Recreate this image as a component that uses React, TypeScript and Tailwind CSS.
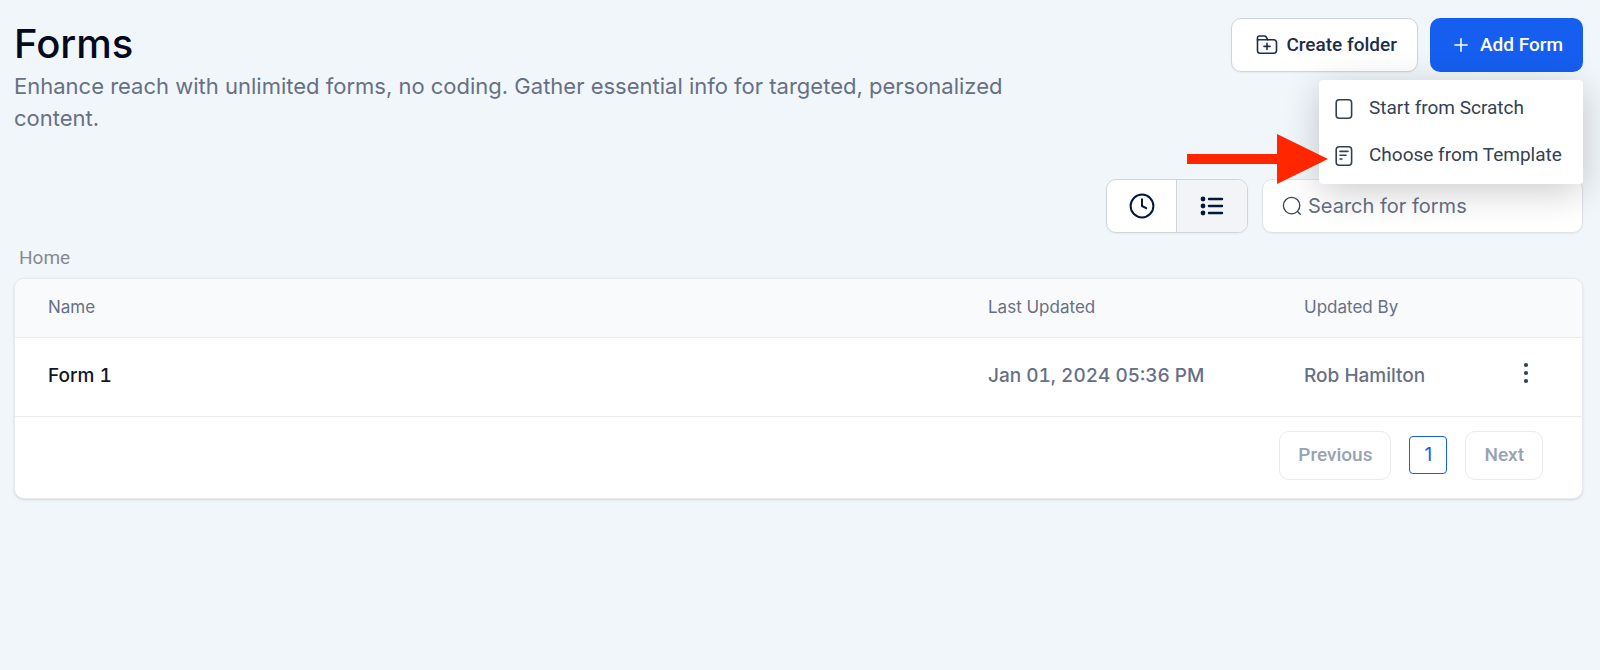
import { useState } from 'react';

interface FormRow {
  id: number;
  name: string;
  lastUpdated: string;
  updatedBy: string;
}

const forms: FormRow[] = [
  {
    id: 1,
    name: 'Form 1',
    lastUpdated: 'Jan 01, 2024 05:36 PM',
    updatedBy: 'Rob Hamilton',
  },
];

function FolderPlusIcon() {
  return (
    <svg className="size-[22px] shrink-0" viewBox="0 0 22 22" fill="none" stroke="currentColor" strokeWidth="1.6" strokeLinecap="round" strokeLinejoin="round" aria-hidden="true">
      <path d="M1.5 6V3.8A1.8 1.8 0 0 1 3.3 2h5.2a2 2 0 0 1 1.7 1l1.6 2.8" />
      <path d="M1.5 5.8h16.3a2.7 2.7 0 0 1 2.7 2.7v8a2.7 2.7 0 0 1-2.7 2.7H4.2a2.7 2.7 0 0 1-2.7-2.7z" />
      <path d="M11 9.4v6M8 12.4h6" />
    </svg>
  );
}

function PlusIcon() {
  return (
    <svg className="size-[14px] shrink-0" viewBox="0 0 14 14" fill="none" stroke="currentColor" strokeWidth="1.5" strokeLinecap="round" aria-hidden="true">
      <path d="M7 0.8v12.4M0.8 7h12.4" />
    </svg>
  );
}

function PageIcon({ lines = false }: { lines?: boolean }) {
  return (
    <svg className="h-5 w-[18px] shrink-0" viewBox="0 0 18 20" fill="none" stroke="currentColor" strokeWidth="1.6" strokeLinecap="round" aria-hidden="true">
      <rect x="1.2" y="0.8" width="15.4" height="18.4" rx="3" />
      {lines && <path d="M5 5.4h8M5 9.2h6M5 13h2" />}
    </svg>
  );
}

function ClockIcon() {
  return (
    <svg className="size-[26px]" viewBox="0 0 26 26" fill="none" stroke="currentColor" strokeWidth="2" strokeLinecap="round" strokeLinejoin="round" aria-hidden="true">
      <circle cx="13" cy="13" r="11.4" />
      <path d="M13 6.2V13l4.2 2.2" />
    </svg>
  );
}

function ListIcon() {
  return (
    <svg className="h-5 w-6" viewBox="0 0 24 20" fill="none" stroke="currentColor" strokeWidth="2.4" strokeLinecap="round" aria-hidden="true">
      <path d="M9 3h13M9 10h13M9 17h13" />
      <g fill="currentColor" stroke="none">
        <circle cx="3" cy="3" r="2.4" />
        <circle cx="3" cy="10" r="2.4" />
        <circle cx="3" cy="17" r="2.4" />
      </g>
    </svg>
  );
}

function SearchIcon() {
  return (
    <svg className="size-5 shrink-0" viewBox="0 0 20 20" fill="none" stroke="currentColor" strokeWidth="1.3" strokeLinecap="round" aria-hidden="true">
      <circle cx="9.6" cy="9.6" r="8.2" />
      <path d="M15.5 15.5l2.8 2.8" />
    </svg>
  );
}

function DotsIcon() {
  return (
    <svg className="h-6 w-2" viewBox="0 0 8 24" fill="currentColor" aria-hidden="true">
      <circle cx="4" cy="4" r="2.1" />
      <circle cx="4" cy="12" r="2.1" />
      <circle cx="4" cy="20" r="2.1" />
    </svg>
  );
}

function AddFormMenu() {
  return (
    <div
      role="menu"
      className="absolute top-full right-0 z-10 mt-2 flex w-[264px] flex-col rounded-[4px] bg-white py-[5px] font-[Roboto,sans-serif] text-[19px] text-[#344054] shadow-[0_8px_36px_rgba(0,0,0,0.2)]"
    >
      <button role="menuitem" className="flex h-[47px] items-center gap-4 px-4 whitespace-nowrap">
        <PageIcon />
        Start from Scratch
      </button>
      <button role="menuitem" className="flex h-[47px] items-center gap-4 px-4 whitespace-nowrap">
        <PageIcon lines />
        Choose from Template
      </button>
      {/* Pointer to the template option */}
      <svg className="pointer-events-none absolute top-[54px] -left-[132px] h-[50px] w-[142px]" viewBox="0 0 142 50" fill="#ff2600" aria-hidden="true">
        <path d="M0 20h90V0l51 25-51 25V30H0z" />
      </svg>
    </div>
  );
}

export default function App() {
  const [search, setSearch] = useState('');
  const [menuOpen, setMenuOpen] = useState(true);

  return (
    <div className="min-h-screen bg-[#f1f6fa] pt-[18px] pr-[17px] pb-8 pl-[14px] font-[Inter,sans-serif] text-[#1d2939]">
      <header className="flex items-start justify-between">
        <div className="max-w-[1000px]">
          <h1 className="text-[40px] leading-[52px] font-medium text-[#020a20]">Forms</h1>
          <p className="text-[22px] leading-8 text-[#667085]">
            Enhance reach with unlimited forms, no coding. Gather essential info for targeted, personalized content.
          </p>
        </div>

        <div className="flex gap-3 font-[Roboto,sans-serif] text-[19px] font-medium whitespace-nowrap">
          <button className="flex h-[54px] items-center gap-2 rounded-[10px] border border-[#d0d5dd] bg-white pr-5 pl-6 text-[#1d2e4a] shadow-xs">
            <FolderPlusIcon />
            Create folder
          </button>
          <div className="relative font-normal">
            <button
              className="flex h-[54px] items-center gap-3 rounded-[10px] bg-[#155eef] pr-5 pl-6 font-medium text-white"
              aria-expanded={menuOpen}
              onClick={() => setMenuOpen(!menuOpen)}
            >
              <PlusIcon />
              Add Form
            </button>
            {menuOpen && <AddFormMenu />}
          </div>
        </div>
      </header>

      <div className="mt-[45px] flex justify-end gap-[14px]">
        <div className="flex h-[54px] w-[142px] divide-x divide-[#d0d5dd] overflow-hidden rounded-[10px] border border-[#d0d5dd] bg-white text-[#04183a] shadow-xs">
          <button className="flex w-[70px] items-center justify-center" aria-label="Recent">
            <ClockIcon />
          </button>
          <button className="flex flex-1 items-center justify-center bg-[#f2f4f8]" aria-label="List view">
            <ListIcon />
          </button>
        </div>
        <label className="flex h-[54px] w-[321px] items-center gap-1.5 rounded-[10px] border border-[#dfe2e8] bg-white px-[19px] text-[#344054] shadow-xs">
          <SearchIcon />
          <input
            type="text"
            value={search}
            onChange={(e) => setSearch(e.target.value)}
            placeholder="Search for forms"
            aria-label="Search for forms"
            className="min-w-0 flex-1 text-[20px] outline-none placeholder:text-[#667085]"
          />
        </label>
      </div>

      <nav className="mt-[13px] px-[5px] font-[Roboto,sans-serif] text-[19px] leading-6 text-[#858a90]">
        <a href="#home">Home</a>
      </nav>

      <section className="mt-2 overflow-hidden rounded-[10px] border border-[#e7eaf0] bg-white shadow-sm">
        <table className="w-full table-fixed text-left">
          <colgroup>
            <col />
            <col className="w-[316px]" />
            <col className="w-[206px]" />
            <col className="w-[72px]" />
          </colgroup>
          <thead>
            <tr className="h-[58px] border-b border-[#eaecf0] bg-[#f9fafc] text-[17px] text-[#667085]">
              <th className="pl-[33px] font-normal">Name</th>
              <th className="font-normal">Last Updated</th>
              <th className="font-normal">Updated By</th>
              <th aria-label="Actions" />
            </tr>
          </thead>
          <tbody>
            {forms.map((form) => (
              <tr key={form.id} className="h-[79px] border-b border-[#eaecf0] text-[19px] font-medium text-[#667085] tabular-nums">
                <td className="pl-[33px] text-[#101828]">{form.name}</td>
                <td>{form.lastUpdated}</td>
                <td>{form.updatedBy}</td>
                <td>
                  <button className="flex p-3 pb-5 text-[#344054]" aria-label="Form actions">
                    <DotsIcon />
                  </button>
                </td>
              </tr>
            ))}
          </tbody>
        </table>

        <div className="flex items-center justify-end gap-[18px] pt-[14px] pr-[39px] pb-[18px] font-[Roboto,sans-serif] text-[19px] font-medium text-[#98a2b3]">
          <button className="h-[49px] rounded-[10px] border border-[#e9ebef] px-[18px]">Previous</button>
          <button className="size-[38px] rounded-[4px] border border-[#155eef] font-[Inter,sans-serif] font-normal text-[#155eef]">1</button>
          <button className="h-[49px] rounded-[10px] border border-[#e9ebef] px-[18px]">Next</button>
        </div>
      </section>
    </div>
  );
}
